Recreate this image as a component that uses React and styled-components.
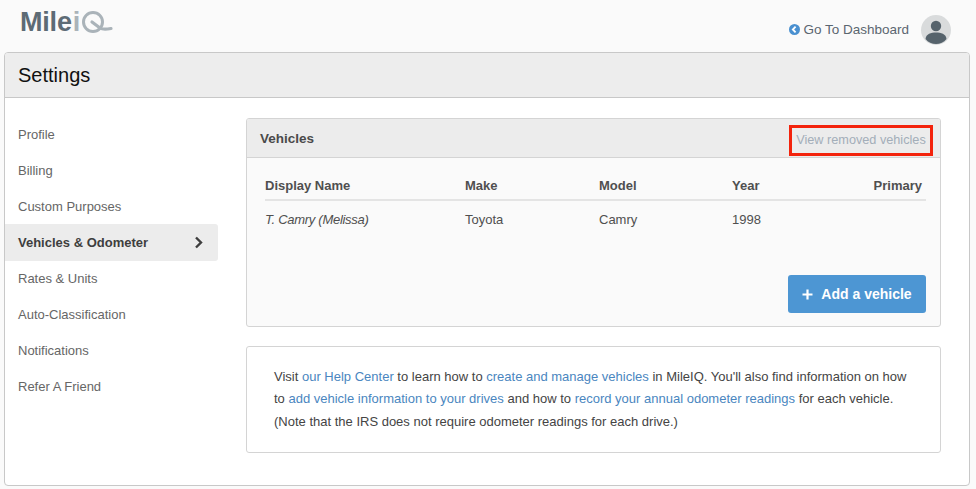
import React from 'react'
import styled, { createGlobalStyle } from 'styled-components'

const Global = createGlobalStyle`
  html, body {
    margin: 0;
    padding: 0;
    background: #fafafa;
    font-family: 'Liberation Sans', Arial, sans-serif;
    color: #555;
  }
  * { box-sizing: border-box; }
`

const Page = styled.div`
  width: 976px;
  height: 489px;
  overflow: hidden;
  padding: 0 6px 0 4px;
`

const TopBar = styled.header`
  height: 52px;
  display: flex;
  align-items: flex-start;
  justify-content: space-between;
`

const Logo = styled.div`
  display: flex;
  align-items: flex-start;
  margin: 7px 0 0 16px;
  height: 30px;
`

const LogoMain = styled.span`
  font-size: 27px;
  line-height: 30px;
  font-weight: 700;
  color: #5d6b75;
  letter-spacing: -0.2px;
`

const LogoLight = styled.span`
  font-size: 27px;
  line-height: 30px;
  font-weight: 700;
  color: #aab3b9;
  margin-left: 1px;
`

const LogoQ = styled.svg`
  width: 32px;
  height: 24px;
  margin: 3px 0 0 1px;
`

const UserArea = styled.div`
  display: flex;
  align-items: center;
  margin: 15px 19px 0 0;
`

const DashLink = styled.a`
  display: flex;
  align-items: center;
  gap: 3px;
  font-size: 13.5px;
  color: #5a6670;
  margin: -2px 12px 0 0;
`

const Avatar = styled.svg`
  width: 30px;
  height: 30px;
`

const Panel = styled.section`
  width: 966px;
  height: 434px;
  background: #fff;
  border: 1px solid #c8c8c8;
  border-radius: 4px;
  overflow: hidden;
`

const PanelHead = styled.div`
  height: 45px;
  background: #ededed;
  border-bottom: 1px solid #c8c8c8;
  display: flex;
  align-items: center;
  padding-left: 13px;
  font-size: 20px;
  color: #111;
`

const PanelBody = styled.div`
  display: flex;
  align-items: flex-start;
`

const SideNav = styled.nav`
  width: 213px;
  margin-top: 18px;
  display: flex;
  flex-direction: column;
`

const NavItem = styled.a`
  height: ${(p) => (p.$active ? '37px' : '36px')};
  display: flex;
  align-items: center;
  justify-content: space-between;
  padding: 0 13px;
  font-size: 13px;
  border-radius: ${(p) => (p.$active ? '0 3px 3px 0' : '0')};
  font-weight: ${(p) => (p.$active ? 700 : 400)};
  color: ${(p) => (p.$active ? '#3e3e3e' : '#666')};
  background: ${(p) => (p.$active ? '#ececec' : 'transparent')};
  padding-right: ${(p) => (p.$active ? '14px' : '13px')};
  margin-bottom: ${(p) => (p.$active ? '-1px' : '0')};
`

const Chevron = styled.svg`
  width: 10px;
  height: 13px;
`

const Content = styled.main`
  width: 695px;
  margin: 20px 0 0 28px;
  display: flex;
  flex-direction: column;
  gap: 19px;
`

const Card = styled.div`
  height: 209px;
  background: #fafafa;
  border: 1px solid #d4d4d4;
  border-radius: 3px;
  overflow: hidden;
`

const CardHead = styled.div`
  height: 39px;
  background: #ececec;
  border-bottom: 1px solid #d4d4d4;
  display: flex;
  align-items: center;
  justify-content: space-between;
  padding: 0 7px 0 13px;
`

const CardTitle = styled.h3`
  margin: 0;
  font-size: 13.5px;
  font-weight: 700;
  color: #4a4a4a;
`

const RemovedLink = styled.a`
  width: 144px;
  height: 31px;
  margin-top: 4px;
  border: 3px solid #f3230c;
  display: flex;
  align-items: center;
  justify-content: center;
  font-size: 12.7px;
  color: #a3aeb9;
`

const VehicleTable = styled.div`
  margin: 0 14px 0 18px;
`

const Row = styled.div`
  height: ${(p) => (p.$head ? '43px' : '36px')};
  display: grid;
  grid-template-columns: 200px 134px 133px 1fr 90px;
  align-items: center;
  font-size: 13px;
  color: #4f4f4f;
  font-weight: ${(p) => (p.$head ? 700 : 400)};
  border-bottom: ${(p) => (p.$head ? '2px solid #e4e4e4' : 'none')};
  padding-top: ${(p) => (p.$head ? '13px' : '0')};
`

const Name = styled.span`
  font-style: italic;
  letter-spacing: -0.28px;
`

const RightCell = styled.span`
  text-align: right;
  padding-right: 4px;
`

const ActionRow = styled.div`
  display: flex;
  justify-content: flex-end;
  margin: 38px 14px 0 0;
`

const AddButton = styled.button`
  width: 138px;
  height: 38px;
  border: 0;
  border-radius: 3px;
  background: #4d96d3;
  color: #fff;
  font-family: inherit;
  font-size: 14px;
  font-weight: 700;
  display: flex;
  align-items: center;
  justify-content: center;
  gap: 8px;
`

const PlusIcon = styled.svg`
  width: 11px;
  height: 11px;
`

const InfoCard = styled.div`
  height: 107px;
  background: #fff;
  border: 1px solid #d4d4d4;
  border-radius: 3px;
  padding: 18.5px 27px;
  font-size: 13px;
  line-height: 22.5px;
  color: #444;
`

const HelpLink = styled.a`
  color: #4a86c0;
`

const navLabels = [
  'Profile',
  'Billing',
  'Custom Purposes',
  'Vehicles & Odometer',
  'Rates & Units',
  'Auto-Classification',
  'Notifications',
  'Refer A Friend',
]

const App = () => (
  <Page>
    <Global />
    <TopBar>
      <Logo>
        <LogoMain>Mile</LogoMain>
        <LogoLight>i</LogoLight>
        <LogoQ viewBox="0 0 32 24">
          <circle cx="12" cy="12" r="9.5" fill="none" stroke="#aab3b9" strokeWidth="3" />
          <path d="M11 12 L19 18 Q22 20 30 18.5" fill="none" stroke="#aab3b9" strokeWidth="3.2" strokeLinecap="round" />
        </LogoQ>
      </Logo>
      <UserArea>
        <DashLink>
          <svg width="11" height="11" viewBox="0 0 11 11">
            <circle cx="5.5" cy="5.5" r="5.5" fill="#4a90d0" />
            <path d="M6.6 2.6 L3.8 5.5 L6.6 8.4" fill="none" stroke="#fff" strokeWidth="1.8" />
          </svg>
          Go To Dashboard
        </DashLink>
        <Avatar viewBox="0 0 30 30">
          <circle cx="15" cy="15" r="15" fill="#d9dbdc" />
          <circle cx="15" cy="11" r="5.2" fill="#56636c" />
          <path d="M4.5 24 C5 19 10 17.6 15 17.6 C20 17.6 25 19 25.5 24 C23 27.5 19 29 15 29 C11 29 7 27.5 4.5 24 Z" fill="#56636c" />
        </Avatar>
      </UserArea>
    </TopBar>
    <Panel>
      <PanelHead>Settings</PanelHead>
      <PanelBody>
        <SideNav>
          {navLabels.map((label) => {
            const active = label === 'Vehicles & Odometer'
            return (
              <NavItem key={label} $active={active}>
                {label}
                {active && (
                  <Chevron viewBox="0 0 10 13">
                    <path d="M2 1.5 L7 6.5 L2 11.5" fill="none" stroke="#3e3e3e" strokeWidth="2.4" />
                  </Chevron>
                )}
              </NavItem>
            )
          })}
        </SideNav>
        <Content>
          <Card>
            <CardHead>
              <CardTitle>Vehicles</CardTitle>
              <RemovedLink>View removed vehicles</RemovedLink>
            </CardHead>
            <VehicleTable>
              <Row $head>
                <span>Display Name</span>
                <span>Make</span>
                <span>Model</span>
                <span>Year</span>
                <RightCell>Primary</RightCell>
              </Row>
              <Row>
                <Name>T. Camry (Melissa)</Name>
                <span>Toyota</span>
                <span>Camry</span>
                <span>1998</span>
                <RightCell />
              </Row>
            </VehicleTable>
            <ActionRow>
              <AddButton>
                <PlusIcon viewBox="0 0 11 11">
                  <path d="M5.5 0.5 V10.5 M0.5 5.5 H10.5" stroke="#fff" strokeWidth="2.2" />
                </PlusIcon>
                Add a vehicle
              </AddButton>
            </ActionRow>
          </Card>
          <InfoCard>
            Visit <HelpLink>our Help Center</HelpLink> to learn how to{' '}
            <HelpLink>create and manage vehicles</HelpLink> in MileIQ. You'll also find information on how
            <br />
            to <HelpLink>add vehicle information to your drives</HelpLink> and how to{' '}
            <HelpLink>record your annual odometer readings</HelpLink> for each vehicle.
            <br />
            (Note that the IRS does not require odometer readings for each drive.)
          </InfoCard>
        </Content>
      </PanelBody>
    </Panel>
  </Page>
)

export default App
